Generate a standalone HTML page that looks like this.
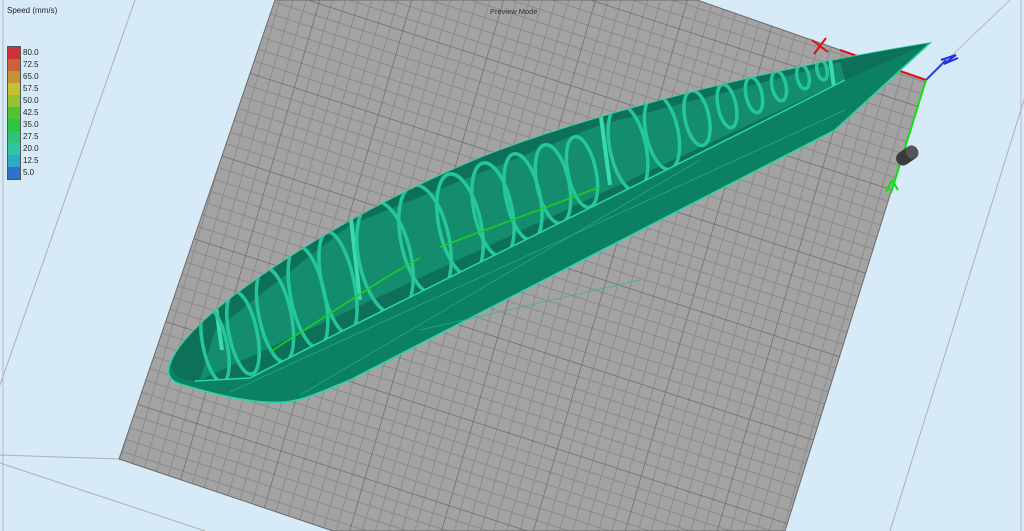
<!DOCTYPE html>
<html><head><meta charset="utf-8"><style>
html,body{margin:0;padding:0;width:1024px;height:531px;overflow:hidden;background:#d7eaf8;font-family:"Liberation Sans",sans-serif}
svg{position:absolute;left:0;top:0}
.lg{position:absolute;left:7px;top:6px;font-size:8px;color:#222}
.sw{position:absolute;left:8px;width:12px;height:12px;border:0}
.lb{position:absolute;left:23px;font-size:8px;color:#222}
</style></head><body>
<svg width="1024" height="531" viewBox="0 0 1024 531">
<defs>
<pattern id="g" width="84" height="84" patternUnits="userSpaceOnUse" patternTransform="matrix(1,0.325,-0.29,1,473,421)">
<rect width="84" height="84" fill="#a3a3a3"/>
<path d="M12 0V84M24 0V84M36 0V84M48 0V84M60 0V84M72 0V84M0 12H84M0 24H84M0 36H84M0 48H84M0 60H84M0 72H84" stroke="#8a8a8a" stroke-width="0.9" fill="none"/>
<path d="M0 0V84M0 0H84" stroke="#6a6a6a" stroke-width="1.4" fill="none"/>
</pattern>
<clipPath id="ci"><path d="M930,43 C760,70 580,118 480,158 C350,212 230,290 190,335 C165,362 165,378 195,381 L250,378 C400,300 650,180 845,80 Z"/></clipPath>
</defs>
<line x1="3" y1="0" x2="3" y2="531" stroke="#b8b8b8"/>
<line x1="1021" y1="0" x2="1021" y2="531" stroke="#b8b8b8"/>
<line x1="0" y1="455" x2="119" y2="459" stroke="#b0b0b0"/>
<line x1="0" y1="463" x2="205" y2="531" stroke="#b0b0b0"/>
<line x1="135" y1="0" x2="0" y2="385" stroke="#b0b0b0"/>
<line x1="937" y1="380" x2="890" y2="531" stroke="#b0b0b0"/>
<line x1="1055" y1="0" x2="937" y2="380" stroke="#b0b0b0"/>
<line x1="926" y1="80" x2="1010" y2="0" stroke="#b8b8b8"/>
<polygon points="275,0 697,0 926,80 785,531 333,531 119,459" fill="url(#g)" stroke="#6a6a6a"/>
<line x1="840" y1="50" x2="926" y2="80" stroke="#e01010" stroke-width="2"/>
<path d="M812,40 L828,52 M826,38 L814,54" stroke="#e01010" stroke-width="2"/>
<line x1="926" y1="80" x2="946" y2="60" stroke="#3040e0" stroke-width="2"/>
<path d="M941,60 L956,55 L944,64 L958,58" stroke="#2030e0" stroke-width="2" fill="none"/>
<line x1="926" y1="80" x2="891" y2="193" stroke="#10e010" stroke-width="2"/>
<path d="M892,180 L886,192 M892,180 L898,190" stroke="#10e010" stroke-width="2"/>
<g transform="rotate(-35 908 155)"><rect x="895" y="148" width="24" height="14" rx="7" fill="#3a3a3a"/><ellipse cx="913" cy="155" rx="6" ry="7" fill="#555"/></g>
<path d="M930,43 C760,70 580,118 480,158 C350,212 230,290 190,335 C165,362 162,378 180,384 C220,396 255,404 285,402 C305,400 320,392 350,380 L835,130 Z" fill="#0b8063" stroke="#2ad6a8" stroke-width="1.5"/>
<path d="M930,43 C760,70 580,118 480,158 C350,212 230,290 190,335 C165,362 165,378 195,381 L250,378 C400,300 650,180 845,80 Z" fill="#0d7159"/>
<g clip-path="url(#ci)">
<path d="M200,380 L845,80 L840,62 L600,125 L350,225 L215,330 Z" fill="#1aa982" opacity="0.5"/>
<path d="M600,110 L610,185 M350,210 L360,300 M830,58 L835,95 M215,300 L222,350" stroke="#3ad9ae" stroke-width="4"/>
<g fill="none" stroke="#25c69a" stroke-width="3.5">
<ellipse cx="215" cy="345" rx="12" ry="38" transform="rotate(-12 215 345)"/>
<ellipse cx="243" cy="333" rx="14" ry="42" transform="rotate(-12 243 333)"/>
<ellipse cx="275" cy="315" rx="16" ry="48" transform="rotate(-12 275 315)"/>
<ellipse cx="308" cy="297" rx="17" ry="52" transform="rotate(-12 308 297)"/>
<ellipse cx="338" cy="283" rx="16" ry="52" transform="rotate(-12 338 283)"/>
<ellipse cx="385" cy="258" rx="26" ry="58" transform="rotate(-12 385 258)"/>
<ellipse cx="425" cy="240" rx="24" ry="56" transform="rotate(-12 425 240)"/>
<ellipse cx="460" cy="225" rx="21" ry="52" transform="rotate(-12 460 225)"/>
<ellipse cx="493" cy="210" rx="19" ry="48" transform="rotate(-12 493 210)"/>
<ellipse cx="523" cy="197" rx="17" ry="44" transform="rotate(-12 523 197)"/>
<ellipse cx="553" cy="184" rx="16" ry="40" transform="rotate(-12 553 184)"/>
<ellipse cx="582" cy="172" rx="14" ry="36" transform="rotate(-12 582 172)"/>
<ellipse cx="628" cy="148" rx="18" ry="44" transform="rotate(-12 628 148)"/>
<ellipse cx="662" cy="132" rx="16" ry="38" transform="rotate(-12 662 132)"/>
<ellipse cx="697" cy="118" rx="12" ry="28" transform="rotate(-12 697 118)"/>
<ellipse cx="727" cy="106" rx="9" ry="22" transform="rotate(-12 727 106)"/>
<ellipse cx="754" cy="95" rx="8" ry="18" transform="rotate(-12 754 95)"/>
<ellipse cx="779" cy="86" rx="7" ry="15" transform="rotate(-12 779 86)"/>
<ellipse cx="803" cy="77" rx="6" ry="12" transform="rotate(-12 803 77)"/>
<ellipse cx="822" cy="70" rx="5" ry="10" transform="rotate(-12 822 70)"/>
</g>
<path d="M270,352 L385,278 L420,258 M440,247 L600,187" stroke="#1ed01e" stroke-width="1.5" fill="none"/>
</g>
<path d="M195,381 L250,378 C400,300 650,180 845,80" stroke="#2ad6a8" stroke-width="1.5" fill="none"/>
<path d="M230,392 L845,110 M300,395 L700,160 M420,330 L640,280" stroke="#24b58c" stroke-width="0.8" fill="none" opacity="0.8"/>
</svg>
<div class="lg">Speed (mm/s)</div>
<div style="position:absolute;left:8px;top:47px;width:12px;height:132px;outline:1px solid #555"></div>
<div class="sw" style="top:47px;background:#cc3038"></div><div class="lb" style="top:48px">80.0</div>
<div class="sw" style="top:59px;background:#cc6038"></div><div class="lb" style="top:60px">72.5</div>
<div class="sw" style="top:71px;background:#c49232"></div><div class="lb" style="top:72px">65.0</div>
<div class="sw" style="top:83px;background:#c2c232"></div><div class="lb" style="top:84px">57.5</div>
<div class="sw" style="top:95px;background:#90c232"></div><div class="lb" style="top:96px">50.0</div>
<div class="sw" style="top:107px;background:#52c232"></div><div class="lb" style="top:108px">42.5</div>
<div class="sw" style="top:119px;background:#2ec444"></div><div class="lb" style="top:120px">35.0</div>
<div class="sw" style="top:131px;background:#2ec476"></div><div class="lb" style="top:132px">27.5</div>
<div class="sw" style="top:143px;background:#2ec4a4"></div><div class="lb" style="top:144px">20.0</div>
<div class="sw" style="top:155px;background:#2eaac4"></div><div class="lb" style="top:156px">12.5</div>
<div class="sw" style="top:167px;background:#2e72cc"></div><div class="lb" style="top:168px">5.0</div>
<div style="position:absolute;left:490px;top:7px;font-size:7.5px;color:#333">Preview Mode</div>
</body></html>
